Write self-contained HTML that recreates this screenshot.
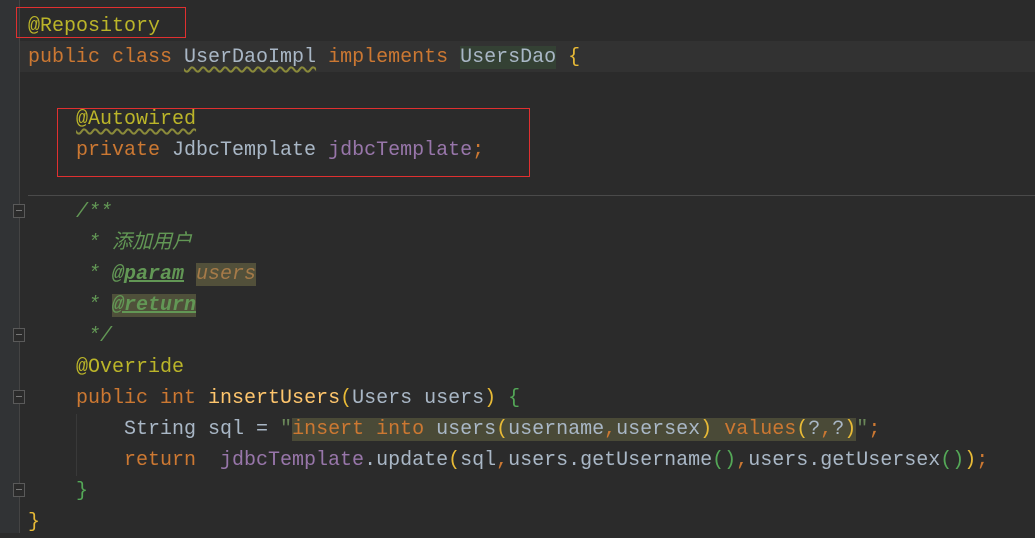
<!DOCTYPE html>
<html><head><meta charset="utf-8"><style>
html,body{margin:0;padding:0}
body{width:1035px;height:533px;background:#2b2b2b;position:relative;overflow:hidden;font-family:"Liberation Mono","Noto Sans CJK SC",monospace;font-size:20px}
.gut{position:absolute;left:0;top:0;width:19px;height:533px;background:#313335}
.gl{position:absolute;left:19px;top:0;width:1px;height:533px;background:#444}
.cur{position:absolute;left:20px;right:0;top:41px;height:31px;background:#323232}
.l{position:absolute;left:28px;height:31px;line-height:31px;white-space:pre;color:#a9b7c6}
.k{color:#cc7832}.a{color:#bbb529}.f{color:#9876aa}.c{color:#629755;font-style:italic}
.m{color:#ffc66d}.y{color:#e8ba36}.g{color:#54a857}
.w{text-decoration:underline wavy #8a8a3a;text-underline-offset:4px}
.box{position:absolute;border:1px solid #e03030}
.sep{position:absolute;left:28px;right:0;top:195px;height:1px;background:#4a4a4a}
.fold{position:absolute;left:13px;width:12px;height:14px;border:1px solid #5a5a5a;background:#2b2b2b;box-sizing:border-box}
.fold:after{content:"";position:absolute;left:2px;top:5px;width:6px;height:1px;background:#777}
.ind{position:absolute;left:76px;top:414px;width:1px;height:62px;background:#393939}
</style></head><body>
<div class="gut"></div><div class="gl"></div><div class="cur"></div>
<div class="sep"></div><div class="ind"></div>
<div class="fold" style="top:204px"></div>
<div class="fold" style="top:328px"></div>
<div class="fold" style="top:390px"></div>
<div class="fold" style="top:483px"></div>
<div class="l a" style="top:11px">@Repository</div>
<div class="l" style="top:42px"><span class="k">public class </span><span class="w">UserDaoImpl</span> <span class="k">implements </span><span style="background:#344134">UsersDao</span> <span class="y">{</span></div>
<div class="l" style="top:104px">    <span class="a w">@Autowired</span></div>
<div class="l" style="top:135px">    <span class="k">private </span>JdbcTemplate <span class="f">jdbcTemplate</span><span class="k">;</span></div>
<div class="l c" style="top:197px">    /**</div>
<div class="l c" style="top:228px">     * 添加用户</div>
<div class="l c" style="top:259px">     * <b style="text-decoration:underline">@param</b> <span style="background:#52503a;color:#a57a48">users</span></div>
<div class="l c" style="top:290px">     * <b style="text-decoration:underline;background:#4f503a">@return</b></div>
<div class="l c" style="top:321px">     */</div>
<div class="l a" style="top:352px">    @Override</div>
<div class="l" style="top:383px">    <span class="k">public int </span><span class="m">insertUsers</span><span class="y">(</span>Users users<span class="y">)</span> <span class="g">{</span></div>
<div class="l" style="top:414px">        String sql = <span style="color:#6a8759">"</span><span style="background:#4a4a37"><span class="k">insert into </span>users<span class="y">(</span>username<span class="k">,</span>usersex<span class="y">)</span> <span class="k">values</span><span class="y">(</span>?<span class="k">,</span>?<span class="y">)</span></span><span style="color:#6a8759">"</span><span class="k">;</span></div>
<div class="l" style="top:445px">        <span class="k">return  </span><span class="f">jdbcTemplate</span>.update<span class="y">(</span>sql<span class="k">,</span>users.getUsername<span class="g">()</span><span class="k">,</span>users.getUsersex<span class="g">()</span><span class="y">)</span><span class="k">;</span></div>
<div class="l g" style="top:476px">    }</div>
<div class="l y" style="top:507px">}</div>
<div class="box" style="left:16px;top:7px;width:168px;height:29px"></div>
<div class="box" style="left:57px;top:108px;width:471px;height:67px"></div>
</body></html>
